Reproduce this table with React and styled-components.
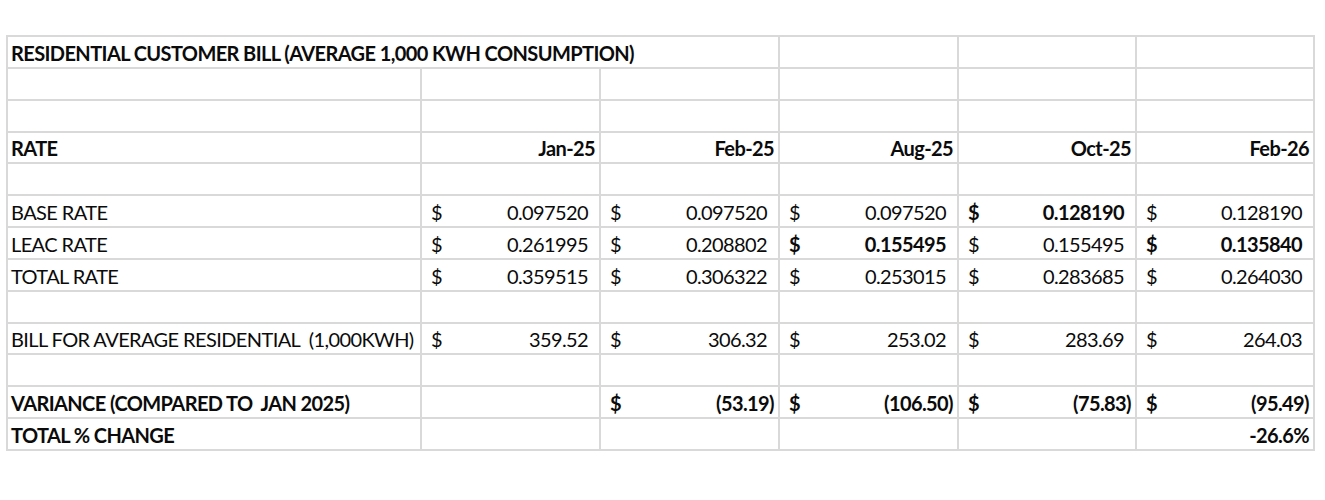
import React from 'react';
import styled, { createGlobalStyle } from 'styled-components';

const GlobalStyle = createGlobalStyle`
  html, body {
    margin: 0;
    padding: 0;
    background: #ffffff;
  }
  body {
    font-family: Lato, "Open Sans", sans-serif;
    color: #0b0b0b;
  }
`;

const LINE = '#d9d9d9';

const Page = styled.div`
  padding: 35px 0 0 6px;
  width: 1325px;
  height: 500px;
  box-sizing: border-box;
`;

const Sheet = styled.div`
  display: grid;
  grid-template-columns: 414px 179px 179px 179px 178px 178px;
  grid-auto-rows: 31.85px;
  width: max-content;
  border-top: 2px solid ${LINE};
  border-left: 2px solid ${LINE};
`;

const Cell = styled.div`
  display: flex;
  align-items: flex-end;
  justify-content: ${(p) => (p.$right ? 'flex-end' : 'space-between')};
  grid-column: span ${(p) => p.$span || 1};
  border-right: 2px solid ${LINE};
  border-bottom: 2px solid ${LINE};
  padding: 0 ${(p) => (p.$right ? 4 : 3)}px 2px 3px;
  font-size: 20px;
  line-height: 24px;
  letter-spacing: -0.6px;
  font-weight: ${(p) => (p.$bold ? 700 : 400)};
  white-space: pre;
  overflow: hidden;
  min-width: 0;
`;

const Money = styled(Cell)`
  padding: 0 4px 2px 9px;
`;

const Amount = styled.span`
  font-weight: ${(p) => (p.$bold ? 700 : 400)};
  padding-right: ${(p) => (p.$paren ? 0 : 7)}px;
`;

const Dollar = styled.span`
  font-weight: ${(p) => (p.$bold ? 700 : 400)};
`;

const months = ['Jan-25', 'Feb-25', 'Aug-25', 'Oct-25', 'Feb-26'];

const rows = [
  {
    label: 'BASE RATE',
    values: [['0.097520'], ['0.097520'], ['0.097520'], ['0.128190', true], ['0.128190']],
  },
  {
    label: 'LEAC RATE',
    values: [['0.261995'], ['0.208802'], ['0.155495', true], ['0.155495'], ['0.135840', true]],
  },
  {
    label: 'TOTAL RATE',
    values: [['0.359515'], ['0.306322'], ['0.253015'], ['0.283685'], ['0.264030']],
  },
];

const EmptyRow = () => (
  <>
    {Array.from({ length: 6 }).map((_, i) => (
      <Cell key={i} />
    ))}
  </>
);

const MoneyCell = ({ value, bold, paren }) => (
  <Money $bold={bold}>
    <Dollar $bold={bold}>$</Dollar>
    <Amount $bold={bold} $paren={paren}>{value}</Amount>
  </Money>
);

const App = () => (
  <>
    <GlobalStyle />
    <Page>
      <Sheet>
        <Cell $span={3} $bold>RESIDENTIAL CUSTOMER BILL (AVERAGE 1,000 KWH CONSUMPTION)</Cell>
        <Cell />
        <Cell />
        <Cell />

        <EmptyRow />
        <EmptyRow />

        <Cell $bold>RATE</Cell>
        {months.map((m) => (
          <Cell key={m} $bold $right>{m}</Cell>
        ))}

        <EmptyRow />

        {rows.map((r) => (
          <React.Fragment key={r.label}>
            <Cell>{r.label}</Cell>
            {r.values.map(([v, b], i) => (
              <MoneyCell key={i} value={v} bold={b} />
            ))}
          </React.Fragment>
        ))}

        <EmptyRow />

        <Cell>BILL FOR AVERAGE RESIDENTIAL  (1,000KWH)</Cell>
        {['359.52', '306.32', '253.02', '283.69', '264.03'].map((v) => (
          <MoneyCell key={v} value={v} />
        ))}

        <EmptyRow />

        <Cell $bold>VARIANCE (COMPARED TO  JAN 2025)</Cell>
        <Cell />
        {['(53.19)', '(106.50)', '(75.83)', '(95.49)'].map((v) => (
          <MoneyCell key={v} value={v} bold paren />
        ))}

        <Cell $bold>TOTAL % CHANGE</Cell>
        <Cell />
        <Cell />
        <Cell />
        <Cell />
        <Cell $bold $right>-26.6%</Cell>
      </Sheet>
    </Page>
  </>
);

export default App;
